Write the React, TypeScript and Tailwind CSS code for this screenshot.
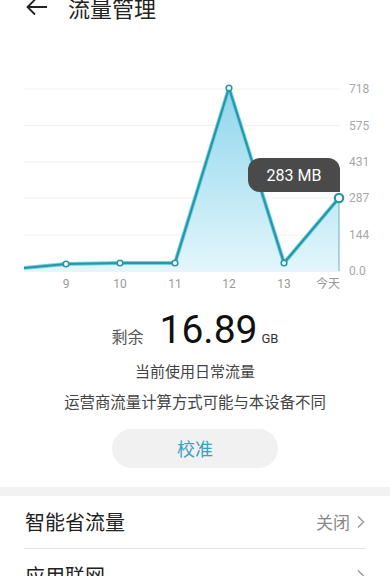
import React from "react";

const pts: [number, number][] = [
  [24, 268],
  [66, 264],
  [120, 263],
  [175, 263],
  [229, 88],
  [284, 263],
  [339, 198],
];

export default function App() {
  const line = pts.map((p, i) => `${i ? "L" : "M"}${p[0]} ${p[1]}`).join(" ");
  const area = `${line} L339 271 L24 271 Z`;
  const grid = [89, 125.5, 162, 198, 235];
  const yl: [string, number][] = [
    ["718", 89],
    ["575", 125.5],
    ["431", 162],
    ["287", 198],
    ["144", 235],
    ["0.0", 271],
  ];
  const xl: [string, number][] = [
    ["9", 66],
    ["10", 120],
    ["11", 175],
    ["12", 229],
    ["13", 284],
  ];
  const cjk = { fontFamily: '"Noto Sans CJK SC", "Noto Sans", sans-serif' };
  return (
    <div className="w-[390px] h-[576px] overflow-hidden bg-white relative" style={cjk}>
      <div className="flex items-center h-[30px] -mt-[8px] pl-[26px]">
        <svg width="22" height="18" viewBox="0 0 22 18" className="text-[#222]">
          <path d="M21 9H2M9 1.5L1.5 9L9 16.5" fill="none" stroke="currentColor" strokeWidth="1.8" />
        </svg>
        <span className="ml-[20px] text-[22px] leading-none text-[#222]">流量管理</span>
      </div>
      <svg width="390" height="273" viewBox="0 22 390 273" className="block">
        <defs>
          <linearGradient id="g" x1="0" y1="88" x2="0" y2="271" gradientUnits="userSpaceOnUse">
            <stop offset="0" stopColor="#8fd6ec" />
            <stop offset="1" stopColor="#e3f6fc" />
          </linearGradient>
        </defs>
        {grid.map((y) => (
          <line key={y} x1="24" x2="340" y1={y} y2={y} stroke="#f1f1f1" strokeWidth="1" />
        ))}
        <line x1="24" x2="340" y1="271" y2="271" stroke="#e6e6e6" strokeWidth="1" />
        <path d={area} fill="url(#g)" />
        <line x1="339" x2="339" y1="198" y2="271" stroke="#6aaebb" strokeWidth="1" />
        <path d={line} fill="none" stroke="#6fd3ea" strokeWidth="4" strokeLinejoin="round" />
        <path d={line} fill="none" stroke="#2a95a3" strokeWidth="2.2" strokeLinejoin="round" />
        {pts.slice(1, 6).map((p) => (
          <circle key={p[0]} cx={p[0]} cy={p[1]} r="2.8" fill="white" stroke="#2a95a3" strokeWidth="1.6" />
        ))}
        <circle cx="339" cy="198" r="4.2" fill="white" stroke="#2a95a3" strokeWidth="2.2" />
        <path d="M260 158 H328 A12 12 0 0 1 340 170 V192 H260 A12 12 0 0 1 248 180 V170 A12 12 0 0 1 260 158 Z" fill="#4a4a4a" />
        <text x="294" y="181" textAnchor="middle" fill="white" fontSize="16" fontFamily="Roboto, sans-serif">283 MB</text>
        {yl.map(([t, y]) => (
          <text key={t} x="349" y={y + 4} fill="#a8a8a8" fontSize="12" fontFamily="Roboto, sans-serif">{t}</text>
        ))}
        {xl.map(([t, x]) => (
          <text key={t} x={x} y="288" textAnchor="middle" fill="#9a9a9a" fontSize="12" fontFamily="Roboto, sans-serif">{t}</text>
        ))}
        <text x="340" y="288" textAnchor="end" fill="#9a9a9a" fontSize="12" style={cjk}>今天</text>
      </svg>
      <div className="flex items-baseline justify-center mt-[16px] h-[44px]">
        <span className="text-[16px] text-[#555] mr-[16px]">剩余</span>
        <span className="text-[39px] leading-none text-[#111]" style={{ fontFamily: "Roboto, sans-serif" }}>16.89</span>
        <span className="text-[13px] text-[#333] ml-[4px]" style={{ fontFamily: "Roboto, sans-serif" }}>GB</span>
      </div>
      <div className="text-center text-[15px] leading-[22px] text-[#444] mt-[5px]">当前使用日常流量</div>
      <div className="text-center text-[15.4px] leading-[22px] text-[#444] mt-[8px]">运营商流量计算方式可能与本设备不同</div>
      <div className="flex justify-center mt-[17px]">
        <div className="w-[166px] h-[39px] rounded-full bg-[#f1f1f1] flex items-center justify-center text-[18px] text-[#3aa3bb]">校准</div>
      </div>
      <div className="h-[9px] bg-[#f2f2f2] mt-[19px]" />
      <div className="mx-[24px] h-[53px] flex items-center justify-between border-b border-[#e6e6e6]">
        <span className="text-[20px] text-[#222] pl-[1px]">智能省流量</span>
        <span className="flex items-center text-[17px] text-[#888]">
          关闭
          <svg width="10" height="14" viewBox="0 0 10 14" className="ml-[6px]">
            <path d="M2 1.5L7.5 7L2 12.5" fill="none" stroke="#999" strokeWidth="1.4" />
          </svg>
        </span>
      </div>
      <div className="mx-[24px] h-[53px] flex items-center justify-between">
        <span className="text-[20px] text-[#222] pl-[1px]">应用联网</span>
        <svg width="10" height="14" viewBox="0 0 10 14">
          <path d="M2 1.5L7.5 7L2 12.5" fill="none" stroke="#999" strokeWidth="1.4" />
        </svg>
      </div>
    </div>
  );
}
